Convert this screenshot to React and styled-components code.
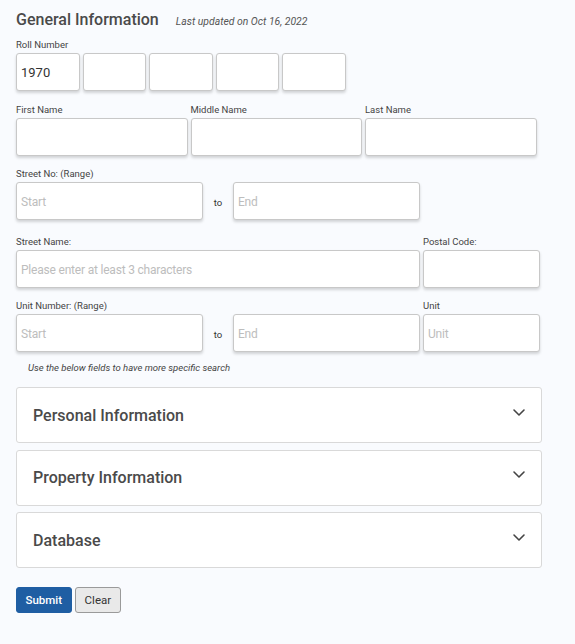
import React from "react";
import styled, { createGlobalStyle } from "styled-components";

const GlobalStyle = createGlobalStyle`
  html, body {
    margin: 0;
    padding: 0;
    background: #f9fbfe;
  }
  body {
    font-family: Roboto, "Liberation Sans", Arial, sans-serif;
    color: #333;
  }
  * { box-sizing: border-box; }
`;

const Page = styled.div`
  padding: 10px 16px 30px 16px;
  width: 575px;
  min-height: 644px;
`;

const Header = styled.div`
  display: flex;
  align-items: baseline;
  gap: 17px;
  height: 24px;
`;

const Title = styled.h2`
  margin: 0;
  font-size: 16px;
  font-weight: 500;
  color: #4a4a4a;
`;

const Updated = styled.span`
  font-size: 10.4px;
  font-style: italic;
  color: #555;
`;

const Row = styled.div`
  display: grid;
  grid-template-columns: ${(p) => p.$cols};
  column-gap: ${(p) => p.$gap || "3px"};
  margin-top: ${(p) => p.$top || "12px"};
  align-items: end;
`;

const Field = styled.div`
  display: flex;
  flex-direction: column;
`;

const Label = styled.label`
  font-size: 9.5px;
  line-height: 12px;
  height: 12px;
  margin-bottom: 2px;
  color: #444;
  white-space: nowrap;
`;

const Inputs = styled.div`
  display: flex;
  gap: 3px;
`;

const Range = styled.div`
  display: grid;
  grid-template-columns: 187px 30px 187px;
`;

const Input = styled.input`
  width: ${(p) => p.$w || "100%"};
  height: 38px;
  border: 1px solid #c8c8c8;
  border-radius: 3px;
  background: #fff;
  box-shadow: 0 2px 3px rgba(0, 0, 0, 0.16);
  padding: 0 3px 0 4px;
  font-family: Roboto, "Liberation Sans", Arial, sans-serif;
  font-size: 13px;
  color: #333;
  outline: none;
  &::placeholder {
    color: #bdbdbd;
    font-size: 12px;
    letter-spacing: -0.2px;
  }
`;

const To = styled.span`
  height: 38px;
  display: flex;
  align-items: center;
  justify-content: center;
  font-size: 9.5px;
  color: #333;
  padding-top: 3px;
`;

const Hint = styled.p`
  margin: 10px 0 0 12px;
  font-size: 9.5px;
  font-style: italic;
  color: #444;
  line-height: 12px;
`;

const Sections = styled.div`
  margin-top: 13px;
  width: 526px;
  display: flex;
  flex-direction: column;
  gap: 6.5px;
`;

const Section = styled.div`
  height: 56px;
  background: #fff;
  border: 1px solid #d9d9d9;
  border-radius: 3px;
  display: flex;
  align-items: center;
  justify-content: space-between;
  padding: 0 15px 0 16px;
`;

const SectionTitle = styled.span`
  font-size: 16px;
  font-weight: 500;
  color: #4a4a4a;
`;

const Chevron = styled.svg`
  width: 14px;
  height: 14px;
  margin-top: -7px;
`;

const Actions = styled.div`
  margin-top: 19px;
  display: flex;
  gap: 3px;
`;

const Button = styled.button`
  height: 26px;
  padding: 0 ${(p) => (p.$primary ? "8.5px" : "9px")};
  border-radius: 3px;
  font-family: Roboto, "Liberation Sans", Arial, sans-serif;
  font-size: 11.5px;
  font-weight: ${(p) => (p.$primary ? 500 : 400)};
  color: ${(p) => (p.$primary ? "#fff" : "#333")};
  background: ${(p) => (p.$primary ? "#1f5ea3" : "#e9e9e9")};
  border: 1px solid ${(p) => (p.$primary ? "#1f5ea3" : "#9a9a9a")};
  cursor: pointer;
`;

const ChevronDown = () => (
  <Chevron viewBox="0 0 14 14" fill="none">
    <path d="M2 5 L7 10 L12 5" stroke="#444" strokeWidth="1.6" strokeLinecap="round" strokeLinejoin="round" />
  </Chevron>
);

const RangeField = ({ label }) => (
  <Field>
    <Label>{label}</Label>
    <Range>
      <Input placeholder="Start" />
      <To>to</To>
      <Input placeholder="End" />
    </Range>
  </Field>
);

export default function App() {
  return (
    <>
      <GlobalStyle />
      <Page>
        <Header>
          <Title>General Information</Title>
          <Updated>Last updated on Oct 16, 2022</Updated>
        </Header>

        <Row $cols="auto" $top="5px">
          <Field>
            <Label>Roll Number</Label>
            <Inputs>
              <Input $w="63.5px" defaultValue="1970" />
              <Input $w="63.5px" />
              <Input $w="63.5px" />
              <Input $w="63.5px" />
              <Input $w="63.5px" />
            </Inputs>
          </Field>
        </Row>

        <Row $cols="171.5px 171.5px 171.5px" $top="13px">
          <Field>
            <Label>First Name</Label>
            <Input />
          </Field>
          <Field>
            <Label>Middle Name</Label>
            <Input />
          </Field>
          <Field>
            <Label>Last Name</Label>
            <Input />
          </Field>
        </Row>

        <Row $cols="404px" $top="12px">
          <RangeField label="Street No: (Range)" />
        </Row>

        <Row $cols="404px 117px" $top="16px">
          <Field>
            <Label>Street Name:</Label>
            <Input placeholder="Please enter at least 3 characters" />
          </Field>
          <Field>
            <Label>Postal Code:</Label>
            <Input />
          </Field>
        </Row>

        <Row $cols="404px 117px" $top="12px">
          <RangeField label="Unit Number: (Range)" />
          <Field>
            <Label>Unit</Label>
            <Input placeholder="Unit" />
          </Field>
        </Row>

        <Hint>Use the below fields to have more specific search</Hint>

        <Sections>
          {["Personal Information", "Property Information", "Database"].map((t) => (
            <Section key={t}>
              <SectionTitle>{t}</SectionTitle>
              <ChevronDown />
            </Section>
          ))}
        </Sections>

        <Actions>
          <Button $primary>Submit</Button>
          <Button>Clear</Button>
        </Actions>
      </Page>
    </>
  );
}
